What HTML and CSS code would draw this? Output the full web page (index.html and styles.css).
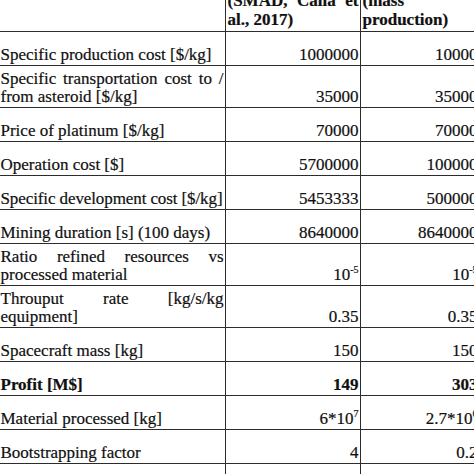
FILE: index.html
```html
<!DOCTYPE html>
<html lang="en">
<head>
<meta charset="utf-8">
<title>Asteroid mining economics</title>
<link rel="stylesheet" href="styles.css">
</head>
<body>
<table class="data">
  <colgroup><col class="c1"><col class="c2"><col class="c3"></colgroup>
  <thead>
    <tr class="head">
      <th class="label"></th>
      <th class="hcell">(SMAD, Calla et al., 2017)</th>
      <th class="hcell">(mass production)</th>
    </tr>
  </thead>
  <tbody>
    <tr class="one"><td class="label">Specific production cost [$/kg]</td><td class="num">1000000</td><td class="num">10000</td></tr>
    <tr class="two"><td class="label">Specific transportation cost to / from asteroid [$/kg]</td><td class="num">35000</td><td class="num">35000</td></tr>
    <tr class="one"><td class="label">Price of platinum [$/kg]</td><td class="num">70000</td><td class="num">70000</td></tr>
    <tr class="one"><td class="label">Operation cost [$]</td><td class="num">5700000</td><td class="num">100000</td></tr>
    <tr class="one"><td class="label tight">Specific development cost [$/kg]</td><td class="num">5453333</td><td class="num">500000</td></tr>
    <tr class="one"><td class="label">Mining duration [s] (100 days)</td><td class="num">8640000</td><td class="num">8640000</td></tr>
    <tr class="two"><td class="label">Ratio refined resources vs processed material</td><td class="num">10<sup>-5</sup></td><td class="num">10<sup>-5</sup></td></tr>
    <tr class="two"><td class="label">Throuput rate [kg/s/kg equipment]</td><td class="num">0.35</td><td class="num">0.35</td></tr>
    <tr class="one"><td class="label">Spacecraft mass [kg]</td><td class="num">150</td><td class="num">150</td></tr>
    <tr class="one bold"><td class="label">Profit [M$]</td><td class="num">149</td><td class="num">303</td></tr>
    <tr class="one"><td class="label">Material processed [kg]</td><td class="num">6*10<sup>7</sup></td><td class="num">2.7*10<sup>6</sup></td></tr>
    <tr class="one"><td class="label">Bootstrapping factor</td><td class="num">4</td><td class="num">0.2</td></tr>
    <tr class="one"><td class="label">&nbsp;</td><td class="num"></td><td class="num"></td></tr>
  </tbody>
</table>
</body>
</html>
```
FILE: styles.css
```css
html, body {
  margin: 0;
  padding: 0;
  background: #ffffff;
  overflow: hidden;
}

body {
  width: 474px;
  height: 474px;
}

.data {
  border-collapse: collapse;
  table-layout: fixed;
  width: 481px;
  margin: -9px 0 0 -2px;
  font-family: "Liberation Serif", "Times New Roman", serif;
  font-size: 17px;
  line-height: 17.5px;
  color: #101010;
  -webkit-text-stroke: 0.2px #101010;
}

.c1 { width: 227px; }
.c2 { width: 135px; }
.c3 { width: 119px; }

.data th,
.data td {
  border: 1px solid #2c2c2c;
  padding: 0 1.5px 1.5px 1.5px;
  vertical-align: bottom;
}

.data thead th {
  border-top: none;
  font-weight: bold;
  line-height: 19px;
}

.head { height: 40px; }
.one { height: 34px; }
.two { height: 42px; }

.hcell {
  text-align: justify;
  text-align-last: left;
}

.label {
  text-align: justify;
  text-align-last: left;
}

.tight { letter-spacing: -0.1px; }

.num {
  text-align: right;
  white-space: nowrap;
}

.bold td { font-weight: bold; }

sup {
  font-size: 10px;
  line-height: 0;
  vertical-align: 7px;
}
```
